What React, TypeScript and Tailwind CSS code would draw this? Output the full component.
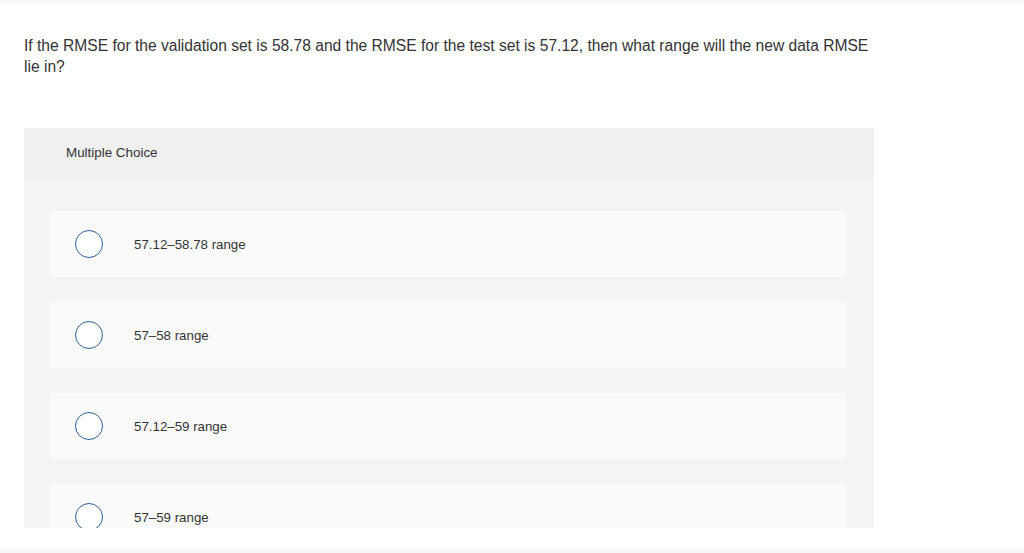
const choices = ["57.12–58.78 range", "57–58 range", "57.12–59 range", "57–59 range"];

function Radio() {
  return <span className="block h-[28px] w-[28px] shrink-0 rounded-full border-[1.5px] border-[#2c5e96] bg-white" />;
}

export default function App() {
  return (
    <div className="flex h-[553px] w-[1024px] flex-col bg-white font-['Liberation_Sans',Arial,sans-serif] text-[#333]">
      <div className="h-[4px] bg-[#f7f7f7]" />
      <div className="h-[524px] overflow-hidden px-[24px] pt-[31px]">
        <p className="w-[850px] text-[15.6px] leading-[21px]">
          If the RMSE for the validation set is 58.78 and the RMSE for the test set is 57.12, then what range will the new data RMSE lie in?
        </p>
        <section className="mt-[51px] w-[850px] overflow-hidden rounded-t-[3px] bg-[#f4f4f4]">
          <div className="flex h-[50px] items-center bg-[#f0f0f0] pl-[42px] text-[13.4px]">Multiple Choice</div>
          <div className="flex flex-col gap-[25px] pl-[26px] pr-[28px] pt-[33px] pb-[30px]">
            {choices.map((c) => (
              <div key={c} className="flex h-[66px] items-center rounded-[3px] bg-[#fafafa] pl-[25px]">
                <Radio />
                <span className="ml-[31px] pt-[2px] text-[13.3px]">{c}</span>
              </div>
            ))}
          </div>
        </section>
      </div>
      <div className="h-[20px]" />
      <div className="h-[5px] bg-[#f7f7f7]" />
    </div>
  );
}
